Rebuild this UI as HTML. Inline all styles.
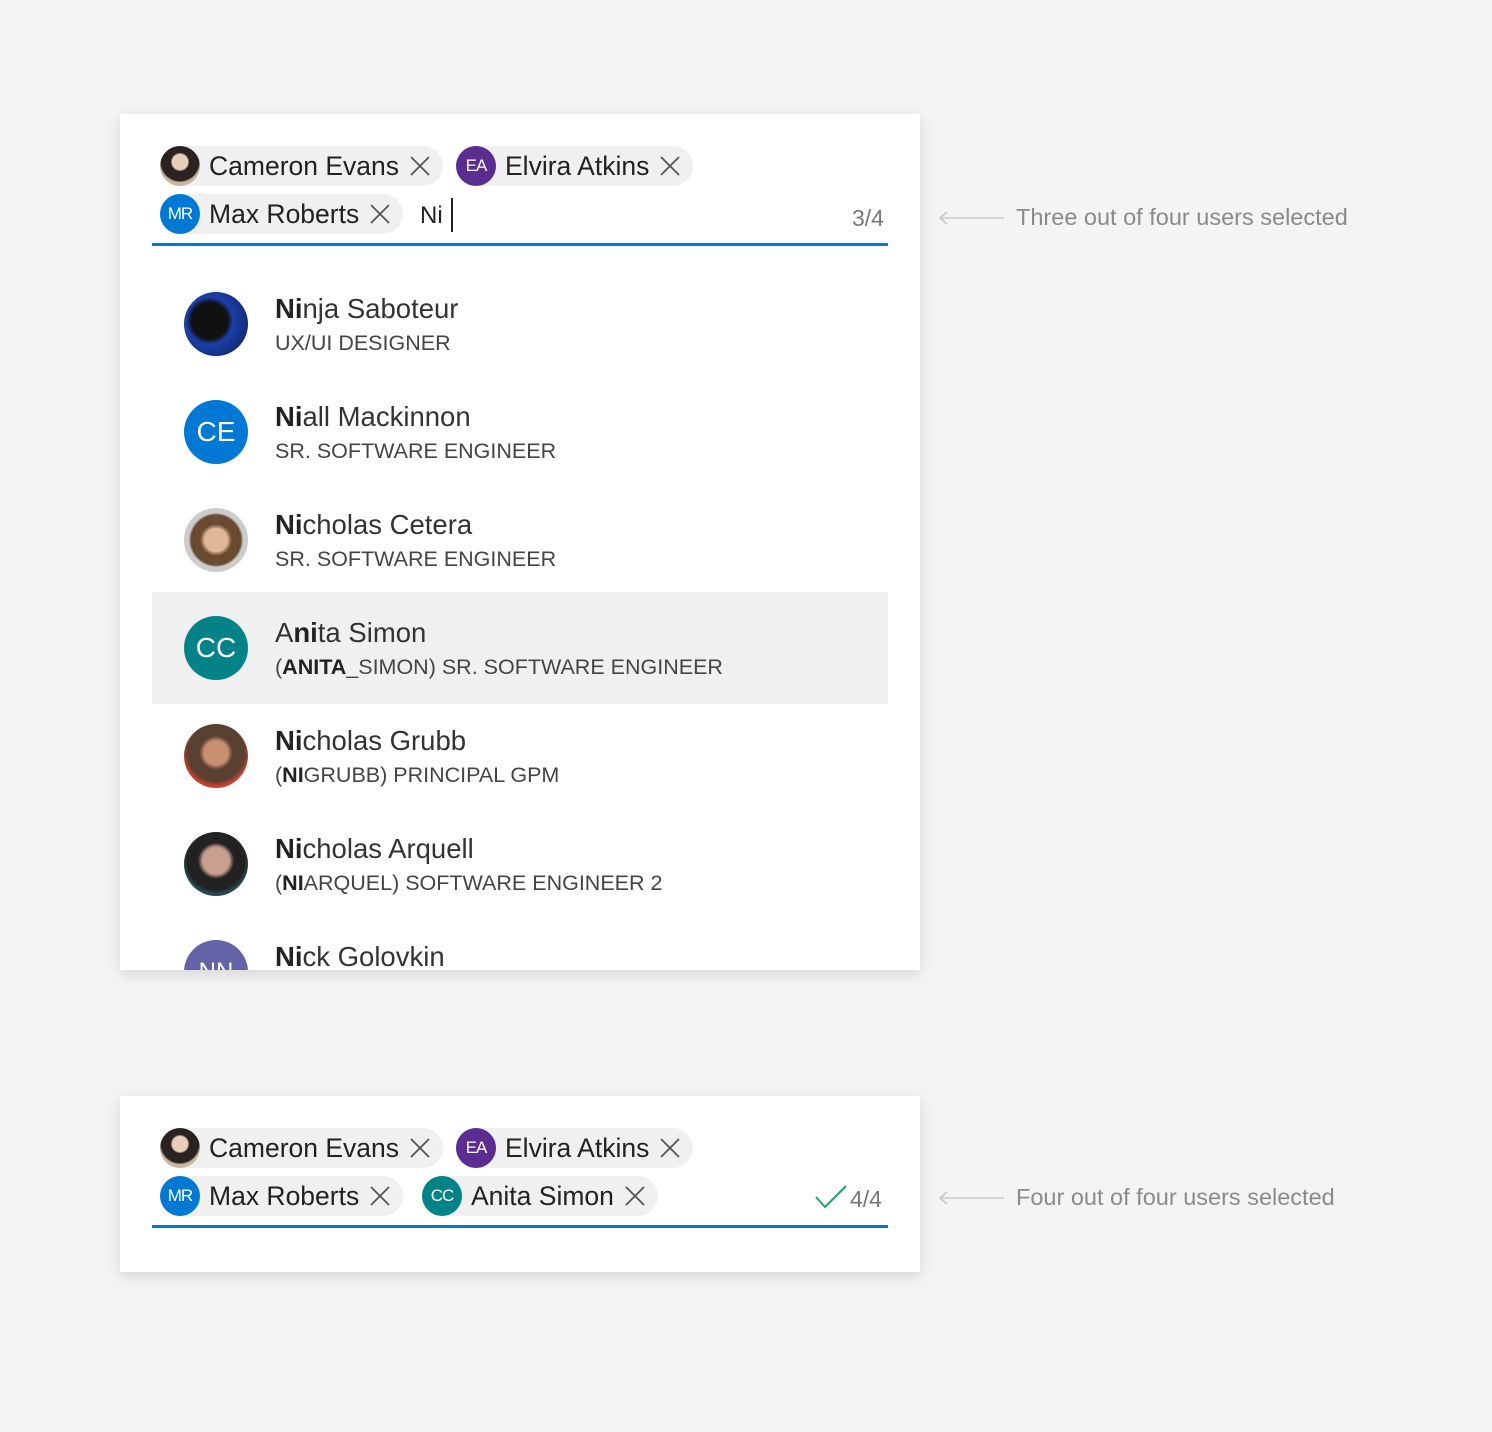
<!DOCTYPE html>
<html><head><meta charset="utf-8"><style>
*{margin:0;padding:0;box-sizing:border-box}
body{width:1492px;height:1432px;background:#f4f4f4;font-family:"Liberation Sans",sans-serif;position:relative;overflow:hidden}
.card{position:absolute;left:120px;width:800px;background:#fff;box-shadow:0 4px 14px rgba(0,0,0,.13)}
.chip{position:absolute;height:40px;border-radius:20px;background:#f0f0f0;display:flex;align-items:center;font-size:26.5px;color:#222;white-space:nowrap}
.av{width:40px;height:40px;border-radius:50%;color:#fff;font-size:17px;display:flex;align-items:center;justify-content:center;flex:none;letter-spacing:-1px}
.chip .t{margin-left:9px}
.x{width:22px;height:22px;margin:0 12px 0 10px;flex:none}
.line{position:absolute;left:32px;width:736px;height:3px;background:#0078d4}
.it{position:absolute;left:32px;width:736px;height:108px}
.it .a{position:absolute;left:32px;top:22px;width:64px;height:64px;border-radius:50%;color:#fff;font-size:28px;display:flex;align-items:center;justify-content:center}
.it .n{position:absolute;left:123px;top:23px;font-size:27.5px;color:#333;white-space:nowrap}
.it .s{position:absolute;left:123px;top:61px;font-size:21.5px;color:#444;white-space:nowrap}
b{font-weight:bold;color:#222}
.ann{position:absolute;left:938px;font-size:23.5px;color:#8a8a8a;display:flex;align-items:center}
</style></head><body>
<svg width="0" height="0" style="position:absolute"><defs><symbol id="xx" viewBox="0 0 22 22"><path d="M2 2L20 20M20 2L2 20" stroke="#555" stroke-width="1.8"/></symbol></defs></svg>

<div class="card" style="top:114px;height:856px;overflow:hidden">
 <div class="chip" style="left:40px;top:32px"><div class="av" style="background:radial-gradient(circle at 50% 40%,#e8cdb8 0 25%,#2a2220 30% 60%,#c9b6a0 65%)"></div><span class="t">Cameron Evans</span><svg class="x"><use href="#xx"/></svg></div>
 <div class="chip" style="left:336px;top:32px"><div class="av" style="background:#5c2d91">EA</div><span class="t">Elvira Atkins</span><svg class="x"><use href="#xx"/></svg></div>
 <div class="chip" style="left:40px;top:80px"><div class="av" style="background:#0078d4">MR</div><span class="t">Max Roberts</span><svg class="x"><use href="#xx"/></svg></div>
 <div style="position:absolute;left:300px;top:88px;font-size:24px;color:#222">Ni</div>
 <div style="position:absolute;left:331px;top:84px;width:2px;height:34px;background:#222"></div>
 <div style="position:absolute;left:732px;top:91px;font-size:23px;color:#777">3/4</div>
 <div class="line" style="top:129px"></div>

 <div class="it" style="top:156px"><div class="a" style="background:radial-gradient(circle at 40% 45%,#111 0 35%,#1c3fa8 45%,#0a1a50)"></div><div class="n"><b>Ni</b>nja Saboteur</div><div class="s">UX/UI DESIGNER</div></div>
 <div class="it" style="top:264px"><div class="a" style="background:#0078d4">CE</div><div class="n"><b>Ni</b>all Mackinnon</div><div class="s">SR. SOFTWARE ENGINEER</div></div>
 <div class="it" style="top:372px"><div class="a" style="background:radial-gradient(circle at 50% 50%,#e0b898 0 25%,#6a4a30 35% 55%,#ccc 60%)"></div><div class="n"><b>Ni</b>cholas Cetera</div><div class="s">SR. SOFTWARE ENGINEER</div></div>
 <div class="it" style="top:478px;height:112px;background:#f0f0f0"><div class="a" style="background:#038387;top:24px">CC</div><div class="n" style="top:25px">A<b>ni</b>ta Simon</div><div class="s" style="top:63px">(<b>ANITA</b>_SIMON) SR. SOFTWARE ENGINEER</div></div>
 <div class="it" style="top:588px"><div class="a" style="background:radial-gradient(circle at 50% 45%,#c89070 0 25%,#5a4030 35% 60%,#d04030 70%)"></div><div class="n"><b>Ni</b>cholas Grubb</div><div class="s">(<b>NI</b>GRUBB) PRINCIPAL GPM</div></div>
 <div class="it" style="top:696px"><div class="a" style="background:radial-gradient(circle at 50% 45%,#c8a090 0 28%,#222 38% 60%,#2a4a50 70%)"></div><div class="n"><b>Ni</b>cholas Arquell</div><div class="s">(<b>NI</b>ARQUEL) SOFTWARE ENGINEER 2</div></div>
 <div class="it" style="top:804px"><div class="a" style="background:#6264a7;font-size:24px">NN</div><div class="n"><b>Ni</b>ck Golovkin</div></div>
</div>
<div class="ann" style="top:204px"><svg width="68" height="14"><path d="M2 7H66M2 7L9 1M2 7L9 13" stroke="#c8c8c8" stroke-width="1.5" fill="none"/></svg><span style="margin-left:10px">Three out of four users selected</span></div>

<div class="card" style="top:1096px;height:176px">
 <div class="chip" style="left:40px;top:32px"><div class="av" style="background:radial-gradient(circle at 50% 40%,#e8cdb8 0 25%,#2a2220 30% 60%,#c9b6a0 65%)"></div><span class="t">Cameron Evans</span><svg class="x"><use href="#xx"/></svg></div>
 <div class="chip" style="left:336px;top:32px"><div class="av" style="background:#5c2d91">EA</div><span class="t">Elvira Atkins</span><svg class="x"><use href="#xx"/></svg></div>
 <div class="chip" style="left:40px;top:80px"><div class="av" style="background:#0078d4">MR</div><span class="t">Max Roberts</span><svg class="x"><use href="#xx"/></svg></div>
 <div class="chip" style="left:302px;top:80px"><div class="av" style="background:#038387">CC</div><span class="t">Anita Simon</span><svg class="x"><use href="#xx"/></svg></div>
 <svg style="position:absolute;left:694px;top:88px" width="34" height="26"><path d="M2 13L11 23L32 2" stroke="#21a366" stroke-width="2" fill="none"/></svg>
 <div style="position:absolute;left:730px;top:90px;font-size:23px;color:#777">4/4</div>
 <div class="line" style="top:129px"></div>
</div>
<div class="ann" style="top:1184px"><svg width="68" height="14"><path d="M2 7H66M2 7L9 1M2 7L9 13" stroke="#c8c8c8" stroke-width="1.5" fill="none"/></svg><span style="margin-left:10px">Four out of four users selected</span></div>
</body></html>
